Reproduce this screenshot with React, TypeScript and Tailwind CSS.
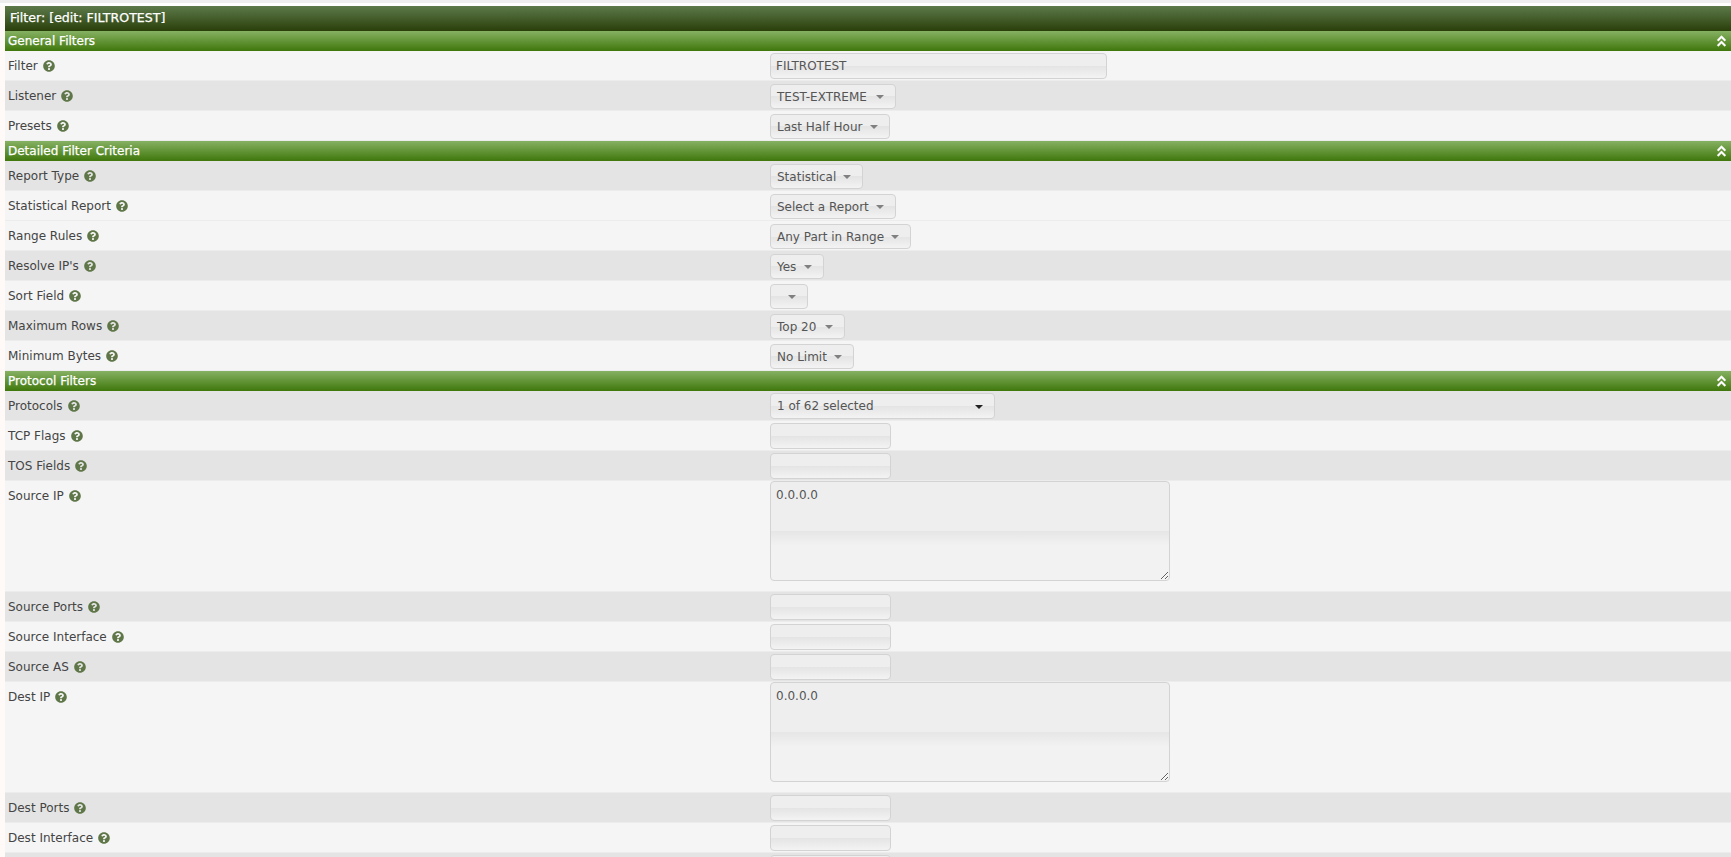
import React from "react";
import { FaQuestionCircle, FaAngleDoubleUp } from "react-icons/fa";

const grad = "bg-[linear-gradient(#eeeeee_0%,#eeeeee_50%,#e4e4e4_50%,#f3f3f3_100%)]";

function Label({ text }: { text: string }) {
  return (
    <div className="w-[765px] shrink-0 pl-[3px] pt-[7px] flex items-start">
      {text && <span className="leading-[16px]">{text}</span>}
      {text && <FaQuestionCircle className="ml-[5px] mt-[2px] w-[12px] h-[12px] text-[#5f7748]" />}
    </div>
  );
}

function Row({ text, dark, tall, sel, children }: { text: string; dark?: boolean; tall?: boolean; sel?: boolean; children?: React.ReactNode }) {
  return (
    <div className={`flex ${tall ? "h-[111px]" : "h-[30px] items-stretch"} ${dark ? "bg-[#e4e4e4]" : "bg-[#f5f5f5]"} border-b border-[#ececec]`}>
      <Label text={text} />
      <div className={tall ? "pt-0" : sel ? "pt-[3px]" : "pt-[2px]"}>{children}</div>
    </div>
  );
}

function Select({ text, w }: { text: string; w: number }) {
  return (
    <div
      className={`h-[25px] flex items-center pl-[6px] rounded-[4px] border border-[#d3d3d3] text-[#555555] ${grad} relative`}
      style={{ width: w }}
    >
      <span className="whitespace-pre">{text}</span>
      <span className="absolute right-[11px] top-[10px] w-0 h-0 border-l-[4px] border-r-[4px] border-t-[4px] border-l-transparent border-r-transparent border-t-[#808080]" />
    </div>
  );
}

function Box({ text, w = 121 }: { text?: string; w?: number }) {
  return (
    <div
      className={`h-[26px] flex items-center pl-[5px] rounded-[4px] border border-[#d3d3d3] text-[#555555] ${grad}`}
      style={{ width: w }}
    >
      {text}
    </div>
  );
}

function Area({ text }: { text: string }) {
  return (
    <textarea
      readOnly
      value={text}
      className="block w-[400px] h-[100px] px-[5px] py-[4px] leading-[18px] rounded-[4px] border border-[#d3d3d3] text-[#555555] outline-none bg-[linear-gradient(#eeeeee_0%,#eeeeee_50%,#e6e6e6_50%,#f2f2f2_65%,#f2f2f2_100%)] resize-y"
    />
  );
}

function Section({ title }: { title: string }) {
  return (
    <div className="h-[20px] flex items-center justify-between pl-[3px] pr-[5px] text-white bg-[linear-gradient(#86b163,#3f770b)] text-[12px] [-webkit-text-stroke:0.25px_white]">
      <span>{title}</span>
      <FaAngleDoubleUp className="w-[9px] h-[14px]" />
    </div>
  );
}

export default function App() {
  return (
    <div className="h-[857px] overflow-hidden bg-[#fff9f7] text-[#444444] text-[12px] font-['DejaVu_Sans',sans-serif]">
      <div className="h-[3px] bg-[#eeeeee]" />
      <div className="h-[3px] bg-white" />
      <div className="ml-[5px]">
        <div className="h-[25px] flex items-center pl-[5px] text-white text-[12.6px] [-webkit-text-stroke:0.25px_white] bg-[linear-gradient(#5d7a4a,#2a3f0a)]">
          Filter: [edit: FILTROTEST]
        </div>
        <Section title="General Filters" />
        <Row text="Filter"><Box text="FILTROTEST" w={337} /></Row>
        <Row text="Listener" dark sel><Select text="TEST-EXTREME" w={126} /></Row>
        <Row text="Presets" sel><Select text="Last Half Hour" w={120} /></Row>
        <Section title="Detailed Filter Criteria" />
        <Row text="Report Type" dark sel><Select text="Statistical" w={93} /></Row>
        <Row text="Statistical Report" sel><Select text="Select a Report" w={126} /></Row>
        <Row text="Range Rules" sel><Select text="Any Part in Range" w={141} /></Row>
        <Row text="Resolve IP's" dark sel><Select text="Yes" w={54} /></Row>
        <Row text="Sort Field" sel><Select text="" w={38} /></Row>
        <Row text="Maximum Rows" dark sel><Select text="Top 20" w={75} /></Row>
        <Row text="Minimum Bytes" sel><Select text="No Limit" w={84} /></Row>
        <Section title="Protocol Filters" />
        <Row text="Protocols" dark>
          <div className={`relative w-[225px] h-[26px] flex items-center pl-[6px] rounded-[4px] border border-[#d3d3d3] text-[#555555] ${grad}`}>
            1 of 62 selected
            <span className="absolute right-[11px] top-[11px] w-0 h-0 border-l-[4px] border-r-[4px] border-t-[4px] border-l-transparent border-r-transparent border-t-[#222222]" />
          </div>
        </Row>
        <Row text="TCP Flags"><Box /></Row>
        <Row text="TOS Fields" dark><Box /></Row>
        <Row text="Source IP" tall><Area text="0.0.0.0" /></Row>
        <Row text="Source Ports" dark><Box /></Row>
        <Row text="Source Interface"><Box /></Row>
        <Row text="Source AS" dark><Box /></Row>
        <Row text="Dest IP" tall><Area text="0.0.0.0" /></Row>
        <Row text="Dest Ports" dark><Box /></Row>
        <Row text="Dest Interface"><Box /></Row>
        <Row text="" dark><Box /></Row>
      </div>
    </div>
  );
}
